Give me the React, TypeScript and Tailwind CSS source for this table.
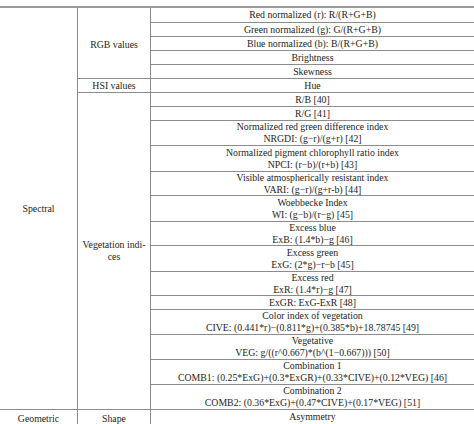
import React from 'react';

type Row = { lines: string[] };

// right-hand column, one entry per grid row (rows 1-20 of the spectral block)
const features: Row[] = [
  { lines: ['Red normalized (r): R/(R+G+B)'] },
  { lines: ['Green normalized (g): G/(R+G+B)'] },
  { lines: ['Blue normalized (b): B/(R+G+B)'] },
  { lines: ['Brightness'] },
  { lines: ['Skewness'] },
  { lines: ['Hue'] },
  { lines: ['R/B [40]'] },
  { lines: ['R/G [41]'] },
  { lines: ['Normalized red green difference index', 'NRGDI: (g\u2212r)/(g+r) [42]'] },
  { lines: ['Normalized pigment chlorophyll ratio index', 'NPCI: (r\u2212b)/(r+b) [43]'] },
  { lines: ['Visible atmospherically resistant index', 'VARI: (g\u2212r)/(g+r-b) [44]'] },
  { lines: ['Woebbecke Index', 'WI: (g\u2212b)/(r\u2212g) [45]'] },
  { lines: ['Excess blue', 'ExB: (1.4*b)\u2212g [46]'] },
  { lines: ['Excess green', 'ExG: (2*g)\u2212r\u2212b [45]'] },
  { lines: ['Excess red', 'ExR: (1.4*r)\u2212g [47]'] },
  { lines: ['ExGR: ExG-ExR [48]'] },
  { lines: ['Color index of vegetation', 'CIVE: (0.441*r)\u2212(0.811*g)+(0.385*b)+18.78745 [49]'] },
  { lines: ['Vegetative', 'VEG: g/((r^0.667)*(b^(1\u22120.667))) [50]'] },
  { lines: ['Combination 1', 'COMB1: (0.25*ExG)+(0.3*ExGR)+(0.33*CIVE)+(0.12*VEG) [46]'] },
  { lines: ['Combination 2', 'COMB2: (0.36*ExG)+(0.47*CIVE)+(0.17*VEG) [51]'] },
];

const cell = 'flex flex-col items-center justify-center text-center border-b border-[#8c8c8c]';

export default function App() {
  return (
    <div className="w-[474px] h-[424px] overflow-hidden bg-white font-[family-name:'Liberation_Serif','Times_New_Roman',serif] text-[9.8px] leading-[12px] text-[#1e1e1e]">
      {/* caption line, cut by the top edge */}
      <div className="h-[6px] overflow-hidden">
        <div className="mt-[-11px] pl-[58px]">Category type</div>
      </div>

      <div className="grid grid-cols-[78px_73px_1fr] grid-rows-[15px_14px_14px_14px_14px_14px_14px_14px_25px_26px_24px_26px_24px_26px_24px_14px_25px_25px_25px_25px_24px] border-t-2 border-[#9a9a9a]">
        <div className={`${cell} col-start-1 row-start-1 row-span-20 border-r`}>Spectral</div>

        <div className={`${cell} col-start-2 row-start-1 row-span-5 border-r pt-[3px]`}>RGB values</div>
        <div className={`${cell} col-start-2 row-start-6 border-r`}>HSI values</div>
        <div className={`${cell} col-start-2 row-start-7 row-span-14 border-r px-[3px]`}>
          <span>Vegetation indi-</span>
          <span>ces</span>
        </div>

        {features.map((f, i) => (
          <div key={i} className={`${cell} col-start-3`} style={{ gridRowStart: i + 1 }}>
            {f.lines.map((l) => (
              <span key={l} className="whitespace-nowrap">
                {l}
              </span>
            ))}
          </div>
        ))}

        <div className="col-start-1 row-start-21 border-r border-[#8c8c8c] flex justify-center pt-[3px]">Geometric</div>
        <div className="col-start-2 row-start-21 border-r border-[#8c8c8c] flex justify-center pt-[3px]">Shape</div>
        <div className="col-start-3 row-start-21 flex justify-center pt-[1px]">Asymmetry</div>
      </div>
    </div>
  );
}
